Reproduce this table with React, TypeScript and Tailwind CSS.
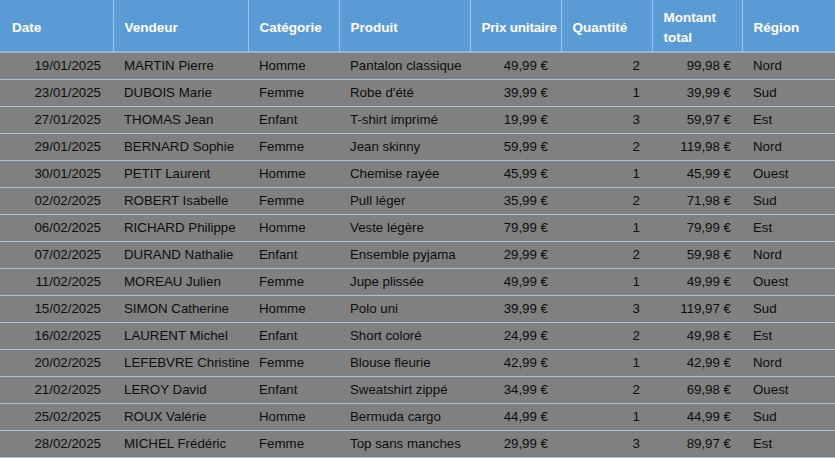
const rows: [string, string, string, string, string, number, string, string][] = [
  ["19/01/2025", "MARTIN Pierre", "Homme", "Pantalon classique", "49,99 €", 2, "99,98 €", "Nord"],
  ["23/01/2025", "DUBOIS Marie", "Femme", "Robe d'été", "39,99 €", 1, "39,99 €", "Sud"],
  ["27/01/2025", "THOMAS Jean", "Enfant", "T-shirt imprimé", "19,99 €", 3, "59,97 €", "Est"],
  ["29/01/2025", "BERNARD Sophie", "Femme", "Jean skinny", "59,99 €", 2, "119,98 €", "Nord"],
  ["30/01/2025", "PETIT Laurent", "Homme", "Chemise rayée", "45,99 €", 1, "45,99 €", "Ouest"],
  ["02/02/2025", "ROBERT Isabelle", "Femme", "Pull léger", "35,99 €", 2, "71,98 €", "Sud"],
  ["06/02/2025", "RICHARD Philippe", "Homme", "Veste légère", "79,99 €", 1, "79,99 €", "Est"],
  ["07/02/2025", "DURAND Nathalie", "Enfant", "Ensemble pyjama", "29,99 €", 2, "59,98 €", "Nord"],
  ["11/02/2025", "MOREAU Julien", "Femme", "Jupe plissée", "49,99 €", 1, "49,99 €", "Ouest"],
  ["15/02/2025", "SIMON Catherine", "Homme", "Polo uni", "39,99 €", 3, "119,97 €", "Sud"],
  ["16/02/2025", "LAURENT Michel", "Enfant", "Short coloré", "24,99 €", 2, "49,98 €", "Est"],
  ["20/02/2025", "LEFEBVRE Christine", "Femme", "Blouse fleurie", "42,99 €", 1, "42,99 €", "Nord"],
  ["21/02/2025", "LEROY David", "Enfant", "Sweatshirt zippé", "34,99 €", 2, "69,98 €", "Ouest"],
  ["25/02/2025", "ROUX Valérie", "Homme", "Bermuda cargo", "44,99 €", 1, "44,99 €", "Sud"],
  ["28/02/2025", "MICHEL Frédéric", "Femme", "Top sans manches", "29,99 €", 3, "89,97 €", "Est"],
];

const cols = ["w-[113px]", "w-[135px]", "w-[91px]", "w-[131px]", "w-[91px]", "w-[91px]", "w-[90px]", "w-[93px]"];

export default function App() {
  return (
    <div className="w-[835px] h-[458px] overflow-hidden bg-[#808080] font-['Liberation_Sans',Arial,sans-serif] text-[13.3px]">
      <table className="table-fixed border-collapse w-[835px]">
        <colgroup>
          {cols.map((c, i) => (
            <col key={i} className={c} />
          ))}
        </colgroup>
        <thead>
          <tr className="h-[52px] bg-[#5b9bd5] text-white font-bold text-left border-b-2 border-[#9cb4d4] text-[13.5px]">
            <th className="pl-[12px] pt-[5px] border-r border-[#9dc3e6] whitespace-nowrap">Date</th>
            <th className="pl-[11px] pt-[5px] border-r border-[#9dc3e6] whitespace-nowrap">Vendeur</th>
            <th className="pl-[11px] pt-[5px] border-r border-[#9dc3e6] whitespace-nowrap">Catégorie</th>
            <th className="pl-[11px] pt-[5px] border-r border-[#9dc3e6] whitespace-nowrap">Produit</th>
            <th className="pl-[11px] pt-[5px] border-r border-[#9dc3e6] whitespace-nowrap tracking-[-0.2px]">Prix unitaire</th>
            <th className="pl-[11px] pt-[5px] border-r border-[#9dc3e6] whitespace-nowrap">Quantité</th>
            <th className="pl-[11px] pt-[5px] border-r border-[#9dc3e6] leading-[20px]">
              Montant
              <br />
              total
            </th>
            <th className="pl-[11px] pt-[5px] whitespace-nowrap">Région</th>
          </tr>
        </thead>
        <tbody className="text-[#0d0d0d]">
          {rows.map((r, i) => (
            <tr key={i} className="h-[27px] border-b border-[#a9bfdc]">
              <td className="pr-[12px] pt-[1px] text-right">{r[0]}</td>
              <td className="pl-[11px] pt-[1px] whitespace-nowrap">{r[1]}</td>
              <td className="pl-[11px] pt-[1px]">{r[2]}</td>
              <td className="pl-[11px] pt-[1px] whitespace-nowrap">{r[3]}</td>
              <td className="pr-[13px] pt-[1px] text-right whitespace-nowrap">{r[4]}</td>
              <td className="pr-[12px] pt-[1px] text-right">{r[5]}</td>
              <td className="pr-[11px] pt-[1px] text-right whitespace-nowrap">{r[6]}</td>
              <td className="pl-[11px] pt-[1px]">{r[7]}</td>
            </tr>
          ))}
        </tbody>
      </table>
    </div>
  );
}
